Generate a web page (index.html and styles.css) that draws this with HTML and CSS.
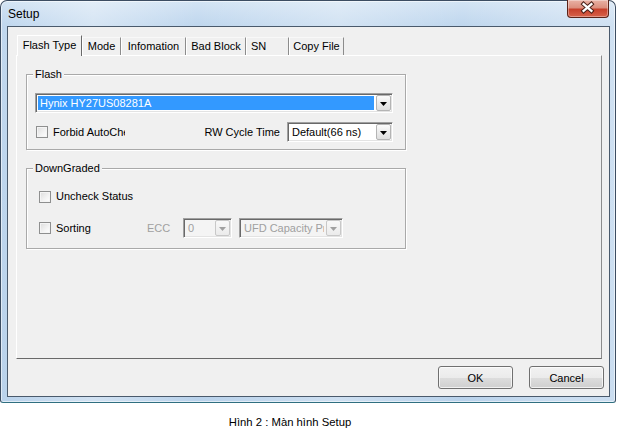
FILE: index.html
```html
<!DOCTYPE html>
<html>
<head>
<meta charset="utf-8">
<title>Setup</title>
<link rel="stylesheet" href="styles.css">
</head>
<body>
<div class="window">
  <div class="titlebar">
    <span class="title">Setup</span>
    <span class="close">
      <svg width="42" height="18" viewBox="0 0 42 18">
        <path d="M17 5 L25 12 M25 5 L17 12" stroke="#4a2018" stroke-width="4.4" stroke-linecap="square" fill="none"/>
        <path d="M17 5 L25 12 M25 5 L17 12" stroke="#ffffff" stroke-width="2.4" stroke-linecap="square" fill="none"/>
      </svg>
    </span>
  </div>
  <div class="client">
    <div class="tabs">
      <div class="tab active t-flash">Flash Type</div>
      <div class="tab t-mode">Mode</div>
      <div class="tab t-info">Infomation</div>
      <div class="tab t-bad">Bad Block</div>
      <div class="tab t-sn">SN</div>
      <div class="tab t-copy">Copy File</div>
    </div>
    <div class="panel">
      <fieldset class="group flash">
        <legend>Flash</legend>
        <div class="select wide">
          <span class="value highlight">Hynix HY27US08281A</span>
          <span class="drop"><svg width="7" height="4" viewBox="0 0 7 4"><path d="M0 0H7L3.5 4Z" fill="#000"/></svg></span>
        </div>
        <div class="row">
          <label class="check forbid"><span class="box"></span><span class="text">Forbid AutoCheck</span></label>
          <span class="lbl rw">RW Cycle Time</span>
          <div class="select rwsel">
            <span class="value">Default(66 ns)</span>
            <span class="drop"><svg width="7" height="4" viewBox="0 0 7 4"><path d="M0 0H7L3.5 4Z" fill="#000"/></svg></span>
          </div>
        </div>
      </fieldset>
      <fieldset class="group down">
        <legend>DownGraded</legend>
        <label class="check line1"><span class="box"></span><span class="text">Uncheck Status</span></label>
        <div class="row row2">
          <label class="check sorting"><span class="box"></span><span class="text">Sorting</span></label>
          <span class="lbl ecc">ECC</span>
          <div class="select disabled eccsel">
            <span class="value">0</span>
            <span class="drop"><svg width="7" height="4" viewBox="0 0 7 4"><path d="M0 0H7L3.5 4Z" fill="#a0a0a0"/></svg></span>
          </div>
          <div class="select disabled ufd">
            <span class="value">UFD Capacity Priority</span>
            <span class="drop"><svg width="7" height="4" viewBox="0 0 7 4"><path d="M0 0H7L3.5 4Z" fill="#a0a0a0"/></svg></span>
          </div>
        </div>
      </fieldset>
    </div>
    <div class="footer">
      <button class="btn">OK</button>
      <button class="btn">Cancel</button>
    </div>
  </div>
</div>
<div class="caption">Hình 2 : Màn hình Setup</div>
</body>
</html>
```

FILE: styles.css
```css
* { box-sizing: border-box; }
html, body { margin: 0; padding: 0; background: #fff; }
body {
  width: 618px;
  height: 432px;
  overflow: hidden;
  font-family: "Liberation Sans", Arial, sans-serif;
  font-size: 11px;
  color: #000;
}

.window {
  width: 616px;
  height: 403px;
  border: 1px solid #3c4d62;
  border-bottom-color: #2f6f80;
  border-radius: 7px 7px 3px 3px;
  background:
    linear-gradient(90deg, rgba(255,255,255,0) 0%, rgba(255,255,255,.35) 15%, rgba(255,255,255,0) 32%, rgba(255,255,255,.3) 55%, rgba(255,255,255,0) 75%, rgba(255,255,255,.25) 92%),
    linear-gradient(180deg, #d3e4f4 0px, #c0d7ee 24px, #b9d2eb 100%);
  box-shadow: inset 0 0 0 1px rgba(255,255,255,.55);
  display: flex;
  flex-direction: column;
}

.titlebar {
  height: 25px;
  display: flex;
  align-items: flex-start;
  padding-left: 7px;
}
.title {
  font-size: 12px;
  line-height: 14px;
  margin-top: 6px;
}
.close {
  margin-left: auto;
  margin-right: 6px;
  margin-top: -1px;
  width: 42px;
  height: 18px;
  border: 1px solid #5b2318;
  border-top: none;
  border-radius: 0 0 4px 4px;
  background: linear-gradient(180deg, #e9b2a5 0%, #dc8f7e 45%, #c7412c 55%, #d7624a 100%);
  box-shadow: inset 0 0 0 1px rgba(255,255,255,.35);
  display: flex;
}
.close svg { display: block; margin: -1px 0 0 -1px; }

.client {
  margin-left: 6px;
  width: 603px;
  height: 371px;
  border: 1px solid #4a5a6c;
  background: #f0f0f0;
  padding: 8px 5px 7px 8px;
  display: flex;
  flex-direction: column;
}

.tabs {
  display: flex;
  align-items: flex-end;
  height: 20px;
  padding-left: 1px;
  position: relative;
  z-index: 1;
}
.tab {
  height: 18px;
  line-height: 17px;
  text-align: center;
  white-space: nowrap;
  border-left: 1px solid #fff;
  border-right: 1px solid #8c8c8c;
  border-top: 1px solid #f8f8f8;
}
.tab.active {
  height: 21px;
  margin-bottom: -1px;
  line-height: 19px;
  border-top: 1px solid #fff;
  background: #f0f0f0;
  border-right-color: #696969;
}
.t-flash { width: 65px; }
.t-mode { width: 39px; }
.t-info { width: 65px; }
.t-bad { width: 60px; }
.t-sn { width: 43px; text-align: left; padding-left: 4px; }
.t-copy { width: 55px; }

.panel {
  width: 586px;
  height: 304px;
  border: 1px solid;
  border-color: #fff #8c8c8c #696969 #fff;
  padding: 12px 0 0 9px;
}

.group {
  margin: 0;
  width: 380px;
  border: 1px solid #a9a9a9;
  box-shadow: 1px 1px 0 #fff, inset 1px 1px 0 #fff;
  min-width: 0;
}
.group legend {
  font-size: 11px;
  line-height: 13px;
  padding: 0 2px;
  margin-left: -2px;
  background: #f0f0f0;
}
.flash { padding: 12px 12px 7px 8px; }
.down { margin-top: 12px; padding: 15px 12px 10px 8px; }

.row {
  display: flex;
  align-items: center;
  height: 20px;
  margin-top: 9px;
}

.select {
  display: flex;
  height: 20px;
  border: 1px solid;
  border-color: #a0a0a0 #fff #fff #a0a0a0;
  box-shadow: inset 1px 1px 0 #696969, inset -1px -1px 0 #e3e3e3;
  background: #fff;
  padding: 1px;
}
.select .value {
  flex: 1;
  min-width: 0;
  padding-left: 2px;
  white-space: nowrap;
  overflow: hidden;
  margin: 1px 2px 1px 1px;
  line-height: 14px;
}
.select .value.highlight {
  background: #3399ff;
  color: #fff;
}
.select .drop {
  width: 15px;
  height: 16px;
  border: 1px solid #b4b4b4;
  border-radius: 2px;
  background: linear-gradient(180deg, #fbfbfb 0%, #ececec 50%, #dedede 100%);
  display: flex;
  align-items: center;
  justify-content: center;
}
.select .drop svg { display: block; margin-top: 1px; }
.wide { width: 358px; }
.rwsel { width: 106px; }

.select.disabled { background: #f4f4f4; color: #a0a0a0; }
.select.disabled .drop { border-color: #c8c8c8; background: linear-gradient(180deg, #f8f8f8, #ebebeb); }
.eccsel { width: 49px; }
.ufd { width: 104px; margin-left: 7px; }

.check {
  display: flex;
  align-items: center;
  white-space: nowrap;
  overflow: hidden;
  line-height: 13px;
}
.check .box {
  flex: none;
  width: 12px;
  height: 12px;
  border: 1px solid #8e8f8f;
  background: linear-gradient(135deg, #dcdcdc 0%, #f3f3f3 60%, #fff 100%);
  box-shadow: inset 0 0 0 1px #f4f4f4;
  margin-right: 5px;
}
.forbid { width: 89px; margin-left: 1px; }
.lbl.rw { margin-left: auto; margin-right: 7px; }

.line1 { margin-left: 4px; height: 13px; }
.row2 { margin-top: 15px; }
.sorting { width: 108px; margin-left: 4px; }
.lbl.ecc { width: 36px; color: #a0a0a0; }

.footer {
  margin-top: 7px;
  display: flex;
  justify-content: flex-end;
  gap: 16px;
}
.btn {
  width: 75px;
  height: 23px;
  font-family: "Liberation Sans", Arial, sans-serif;
  font-size: 11px;
  color: #000;
  padding: 0;
  border: 1px solid #707070;
  border-radius: 3px;
  background: linear-gradient(180deg, #f2f2f2 0%, #ebebeb 50%, #dddddd 51%, #cfcfcf 100%);
  box-shadow: inset 0 0 0 1px rgba(255,255,255,.7);
}

.caption {
  margin-top: 13px;
  padding-right: 38px;
  text-align: center;
  font-size: 11.3px;
  line-height: 13px;
}
```
